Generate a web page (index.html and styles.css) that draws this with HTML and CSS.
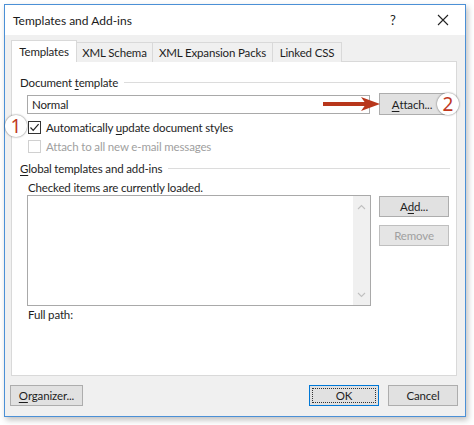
FILE: index.html
```html
<!DOCTYPE html>
<html>
<head>
<meta charset="utf-8">
<link rel="stylesheet" href="styles.css">
</head>
<body>
<div class="window">
  <div class="titlebar">
    <span class="title">Templates and Add-ins</span>
    <span class="help">?</span>
    <svg class="close" width="12" height="12" viewBox="0 0 12 12"><path d="M1 1L11 11M11 1L1 11" stroke="#222" stroke-width="1.1" fill="none"/></svg>
  </div>
  <div class="client">
    <div class="tabs">
      <div class="tab active t1">Templates</div>
      <div class="tab t2">XML Schema</div>
      <div class="tab t3">XML Expansion Packs</div>
      <div class="tab t4">Linked CSS</div>
    </div>
    <div class="panel">
      <div class="group-title"><span>Document <u>t</u>emplate</span><div class="rule"></div></div>
      <div class="row-attach">
        <div class="input">Normal</div>
        <div class="btn attach"><u>A</u>ttach...</div>
      </div>
      <div class="check-row"><span class="cb checked"><svg width="11" height="11" viewBox="0 0 11 11"><path d="M1.5 5.5L4.2 8.3L9.6 2.2" stroke="#222" stroke-width="1.2" fill="none"/></svg></span><span>Automatically <u>u</u>pdate document styles</span></div>
      <div class="check-row disabled"><span class="cb"></span><span>Attach to all new e-mail messages</span></div>
      <div class="group-title second"><span><u>G</u>lobal templates and add-ins</span><div class="rule"></div></div>
      <div class="note">Checked items are currently loaded.</div>
      <div class="row-list">
        <div class="listbox">
          <div class="list-area"></div>
          <div class="scroll">
            <svg width="9" height="6" viewBox="0 0 9 6"><path d="M1 5L4.5 1.5L8 5" stroke="#c0c0c0" stroke-width="1.1" fill="none"/></svg>
            <svg width="9" height="6" viewBox="0 0 9 6"><path d="M1 1L4.5 4.5L8 1" stroke="#c0c0c0" stroke-width="1.1" fill="none"/></svg>
          </div>
        </div>
        <div class="side-buttons">
          <div class="btn side">A<u>d</u>d...</div>
          <div class="btn side dis">Remove</div>
        </div>
      </div>
      <div class="note path">Full path:</div>
    </div>
    <div class="footer">
      <div class="btn foot"><u>O</u>rganizer...</div>
      <div class="spacer"></div>
      <div class="btn foot ok"><span class="focus">OK</span></div>
      <div class="btn foot cancel">Cancel</div>
    </div>
  </div>
  <div class="badge b1">1</div>
  <div class="badge b2">2</div>
  <svg class="arrow" width="58" height="16" viewBox="0 0 58 16"><path d="M0 8H44" stroke="#b8361b" stroke-width="4"/><path d="M38 1L57 8L38 15L43 8Z" fill="#b8361b"/></svg>
</div>
</body>
</html>
```
FILE: styles.css
```css
* { box-sizing: border-box; }
html, body { margin: 0; padding: 0; background: #fff; }
body {
  font-family: Lato, "Noto Sans", sans-serif;
  font-size: 11.5px;
  letter-spacing: -0.15px;
  color: #1e1e1e;
  width: 474px;
  height: 425px;
  overflow: hidden;
}
u { text-decoration: underline; text-underline-offset: 2px; }
.window {
  position: relative;
  margin: 4px 0 0 4px;
  width: 462px;
  height: 413px;
  border: 1px solid #4b90d6;
  background: #f0f0f0;
  box-shadow: 2px 3px 6px rgba(0,0,0,0.25);
  display: flex;
  flex-direction: column;
}
.titlebar {
  height: 30px;
  background: #fff;
  display: flex;
  align-items: center;
  padding-left: 8px;
  flex: none;
}
.title { font-size: 12px; letter-spacing: 0; color: #1a1a1a; flex: 1; }
.help { font-size: 13px; width: 16px; margin-right: 31px; color: #222; }
.close { margin-right: 16px; }
.client {
  flex: 1;
  padding: 5px 8px 0 6px;
  display: flex;
  flex-direction: column;
}
.tabs { display: flex; height: 22px; align-items: flex-end; margin-bottom: -1px; position: relative; z-index: 1; }
.tab {
  height: 20px;
  border: 1px solid #d9d9d9;
  border-left: none;
  border-bottom: none;
  background: #f0f0f0;
  display: flex;
  align-items: center;
  justify-content: center;
}
.tab.active {
  height: 22px;
  background: #fff;
  border-left: 1px solid #d9d9d9;
}
.t1 { width: 66px; }
.t2 { width: 76px; }
.t3 { width: 120px; }
.t4 { width: 69px; }
.panel {
  background: #fff;
  border: 1px solid #d9d9d9;
  height: 315px;
  padding: 6px 6px 0 8px;
  display: flex;
  flex-direction: column;
}
.group-title { display: flex; align-items: center; height: 16px; margin-top: 6px; }
.group-title .rule { flex: 1; height: 1px; background: #dcdcdc; margin-left: 6px; }
.group-title.second { margin-top: 4px; }
.row-attach { display: flex; align-items: center; margin-top: 3px; padding-left: 7px; }
.input {
  width: 343px;
  height: 19px;
  border: 1px solid #a9a9a9;
  padding-left: 4px;
  display: flex;
  align-items: center;
}
.btn {
  background: #e1e1e1;
  border: 1px solid #adadad;
  display: flex;
  align-items: center;
  justify-content: center;
  color: #1e1e1e;
}
.attach { width: 66px; height: 22px; margin-left: 9px; }
.check-row { display: flex; align-items: center; height: 19px; padding-left: 8px; }
.cb {
  width: 13px; height: 13px;
  border: 1px solid #333;
  margin-right: 5px;
  display: flex; align-items: center; justify-content: center;
  background: #fff;
}
.check-row.disabled { color: #a0a0a0; }
.check-row.disabled .cb { border-color: #d0d0d0; }
.row-attach + .check-row { margin-top: 3px; }
.note { padding-left: 8px; margin-top: 3px; height: 16px; display: flex; align-items: center; }
.row-list { display: flex; margin-top: 0; padding-left: 7px; align-items: flex-start; }
.listbox {
  width: 344px;
  height: 111px;
  border: 1px solid #a9a9a9;
  display: flex;
}
.list-area { flex: 1; }
.scroll {
  width: 17px;
  background: #f0f0f0;
  display: flex;
  flex-direction: column;
  justify-content: space-between;
  align-items: center;
  padding: 8px 0 7px;
}
.side-buttons { margin-left: 8px; display: flex; flex-direction: column; gap: 8px; margin-top: 1px; }
.side { width: 70px; height: 21px; }
.side.dis { color: #a0a0a0; border-color: #bfbfbf; background: #e5e5e5; }
.note.path { margin-top: 0; }
.footer { display: flex; margin-top: 9px; height: 21px; margin-left: -1px; }
.foot { width: 73px; height: 21px; }
.spacer { flex: 1; }
.ok { width: 70px; border: 1px solid #0078d7; padding: 2px; margin-right: 9px; }
.ok .focus { width: 100%; height: 100%; border: 1px dotted #333; display: flex; align-items: center; justify-content: center; }
.cancel { width: 70px; margin-right: -1px; }
.badge {
  position: absolute;
  width: 22px; height: 22px;
  border-radius: 50%;
  background: #fff;
  box-shadow: 0 0 2px rgba(0,0,0,0.6);
  color: #c0391e;
  font-family: "Noto Sans", sans-serif;
  letter-spacing: 0;
  font-size: 19px;
  display: flex; align-items: center; justify-content: center;
  line-height: 1;
}
.b1 { left: 0px; top: 110px; }
.b2 { left: 432px; top: 88px; }
.arrow { position: absolute; left: 318px; top: 91px; }
```
